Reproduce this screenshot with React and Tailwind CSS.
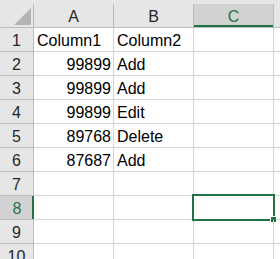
import React from "react";

const rows = [
  ["Column1", "Column2", "text"],
  ["99899", "Add"],
  ["99899", "Add"],
  ["99899", "Edit"],
  ["89768", "Delete"],
  ["87687", "Add"],
  [],
  [],
  [],
  [],
];

export default function App() {
  return (
    <div className="w-[280px] h-[259px] overflow-hidden bg-white font-['Liberation_Sans',Arial,sans-serif] text-[16px] text-black">
      {/* column headers */}
      <div className="flex h-[28px] bg-[#e6e6e6] border-b border-[#bcbcbc]">
        <div className="relative w-[34px] shrink-0 border-r border-[#bcbcbc] mt-[4px]">
          <svg className="absolute left-[14px] top-[4px]" width="17" height="17" viewBox="0 0 17 17">
            <polygon points="17,0 17,17 0,17" fill="#b4b4b4" />
          </svg>
        </div>
        {["A", "B"].map((c) => (
          <div key={c} className="w-[80px] shrink-0 mt-[4px] border-r border-[#bcbcbc] flex items-end justify-center pb-[1px]">
            <span className="leading-[18px] text-[#262626]">{c}</span>
          </div>
        ))}
        <div className="w-[80px] shrink-0 mt-[4px] border-r border-[#bcbcbc] bg-[#d2d2d2] shadow-[inset_0_-2px_0_#217346] flex items-end justify-center pb-[1px]">
          <span className="leading-[18px] text-[#217346]">C</span>
        </div>
        <div className="flex-1 mt-[4px]" />
      </div>

      {rows.map((r, i) => {
        const selected = i === 7;
        return (
          <div key={i} className="flex h-[24px]">
            <div
              className={
                selected
                  ? "w-[34px] shrink-0 bg-[#d2d2d2] border-b border-[#bcbcbc] shadow-[inset_-2px_0_0_#217346] flex items-end justify-center pb-[1px]"
                  : "w-[34px] shrink-0 bg-[#e6e6e6] border-r border-b border-[#bcbcbc] flex items-end justify-center pb-[1px]"
              }
            >
              <span className={selected ? "leading-[18px] text-[#217346]" : "leading-[18px] text-[#262626]"}>{i + 1}</span>
            </div>
            <div className={`w-[80px] shrink-0 border-r border-b border-[#d4d4d4] flex items-end pb-[1px] ${i === 0 ? "pl-[3px]" : "justify-end pr-[2px]"}`}>
              <span className="leading-[18px]">{r[0]}</span>
            </div>
            <div className="w-[80px] shrink-0 border-r border-b border-[#d4d4d4] flex items-end pb-[1px] pl-[3px]">
              <span className="leading-[18px]">{r[1]}</span>
            </div>
            <div className="relative w-[80px] shrink-0 border-r border-b border-[#d4d4d4]">
              {selected && (
                <>
                  <div className="absolute -left-[2px] -top-[2px] w-[83px] h-[27px] border-2 border-[#217346]" />
                  <div className="absolute left-[76px] top-[20px] w-[7px] h-[7px] bg-white" />
                  <div className="absolute left-[77px] top-[21px] w-[5px] h-[5px] bg-[#217346]" />
                </>
              )}
            </div>
            <div className="flex-1 border-b border-[#d4d4d4]" />
          </div>
        );
      })}
    </div>
  );
}
